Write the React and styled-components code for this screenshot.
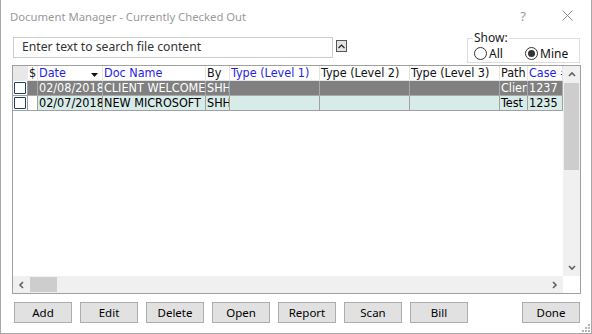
import styled, { createGlobalStyle } from "styled-components";

const UI_FONT = `"Noto Sans", "Open Sans", sans-serif`;
const GRID_FONT = `"DejaVu Sans Condensed", "DejaVu Sans", sans-serif`;

const COLUMNS = [
  { key: "check", width: 15, label: "" },
  { key: "bill", width: 10, label: "$" },
  { key: "date", width: 65, label: "Date", link: true, sorted: true },
  { key: "doc", width: 103, label: "Doc Name", link: true },
  { key: "by", width: 24, label: "By" },
  { key: "t1", width: 90, label: "Type (Level 1)", link: true },
  { key: "t2", width: 90, label: "Type (Level 2)" },
  { key: "t3", width: 90, label: "Type (Level 3)" },
  { key: "path", width: 28, label: "Path" },
  { key: "case", width: 35, label: "Case #", link: true },
];

const ROWS = [
  {
    id: "r1",
    selected: true,
    date: "02/08/2018",
    doc: "CLIENT WELCOME",
    by: "SHH",
    path: "Client",
    case: "1237",
  },
  {
    id: "r2",
    selected: false,
    date: "02/07/2018",
    doc: "NEW MICROSOFT",
    by: "SHH",
    path: "Test",
    case: "1235",
  },
];

const BUTTONS = ["Add", "Edit", "Delete", "Open", "Report", "Scan", "Bill"];

const GlobalStyle = createGlobalStyle`
  html, body {
    margin: 0;
    padding: 0;
    background: #ffffff;
  }
`;

const Window = styled.div`
  position: relative;
  box-sizing: border-box;
  width: 592px;
  height: 334px;
  background: #ffffff;
  border: 1px solid #a8a8a8;
  border-top: none;
  padding: 0 10px 0 11px;
  display: flex;
  flex-direction: column;
  font-family: ${UI_FONT};
`;

const TitleBar = styled.div`
  height: 31px;
  display: flex;
  align-items: center;
  margin: 0 -10px 0 -3px;
`;

const Title = styled.div`
  flex: 1;
  font-size: 11.3px;
  color: #9a9a9a;
  padding: 1px 0 0 1px;
`;

const HelpGlyph = styled.div`
  width: 20px;
  text-align: center;
  font-size: 13px;
  color: #9a9a9a;
  margin-right: 29px;
`;

const CloseGlyph = styled.svg`
  margin-right: 18px;
`;

/* search + show filter */
const TopRow = styled.div`
  margin-top: 6px;
  height: 26px;
  display: flex;
  align-items: flex-start;
`;

const SearchBox = styled.div`
  box-sizing: border-box;
  width: 320px;
  height: 21px;
  margin-left: 1px;
  border: 1px solid #cccccc;
  padding-left: 8px;
  font-size: 12.2px;
  line-height: 18px;
  color: #333333;
`;

const ToggleButton = styled.div`
  box-sizing: border-box;
  width: 11px;
  height: 12px;
  margin: 3px 0 0 3px;
  border: 1px solid #555555;
  background: #e3e3e3;
  display: flex;
  align-items: center;
  justify-content: center;
`;

const ShowGroup = styled.fieldset`
  box-sizing: border-box;
  width: 113px;
  margin: 0 1px 0 auto;
  padding: 0 0 0 6px;
  border: 1px solid #dcdcdc;
  display: flex;
  align-items: center;
  position: relative;
  top: -5px;
  height: 31px;
`;

const Legend = styled.legend`
  padding: 0 1px;
  margin-left: -1px;
  font-size: 12px;
  line-height: 12px;
  color: #222222;
`;

const RadioOption = styled.label`
  display: flex;
  align-items: center;
  gap: 2px;
  font-size: 12px;
  color: #111111;
  width: ${({ $width }) => $width}px;
  margin-top: 1px;
`;

const RadioCircle = styled.span`
  box-sizing: border-box;
  width: 13px;
  height: 13px;
  border: 1px solid #333333;
  border-radius: 50%;
  display: flex;
  align-items: center;
  justify-content: center;

  &::after {
    content: "";
    width: 7px;
    height: 7px;
    border-radius: 50%;
    background: ${({ $checked }) => ($checked ? "#333333" : "transparent")};
  }
`;

/* data grid */
const GridFrame = styled.div`
  margin-top: 2px;
  height: 229px;
  box-sizing: border-box;
  border: 1px solid #a0a0a0;
  display: grid;
  grid-template-columns: 1fr 17px;
  grid-template-rows: 1fr 17px;
`;

const Table = styled.div`
  overflow: hidden;
  font-family: ${GRID_FONT};
  font-size: 12.5px;
`;

const Row = styled.div`
  display: flex;
  height: 15px;
`;

const Cell = styled.div`
  box-sizing: border-box;
  flex: 0 0 ${({ $width }) => $width}px;
  height: 15px;
  padding-left: 1px;
  line-height: 14px;
  white-space: nowrap;
  overflow: hidden;
  position: relative;
  border-right: 1px solid ${({ $line }) => $line};
  border-bottom: 1px solid ${({ $line }) => $line};
  background: ${({ $bg }) => $bg};
  color: ${({ $color }) => $color};
`;

const CheckCell = styled(Cell)`
  padding: 1px 0 0 1px;
`;

const Checkbox = styled.span`
  display: block;
  box-sizing: border-box;
  width: 12px;
  height: 12px;
  border: 1px solid #1f3f66;
  border-radius: 1px;
  background: #ffffff;
`;

const SortArrow = styled.svg`
  position: absolute;
  right: 4px;
  top: 7px;
`;

const VScroll = styled.div`
  background: #f0f0f0;
  display: flex;
  flex-direction: column;
`;

const HScroll = styled.div`
  background: #f0f0f0;
  display: flex;
`;

const ScrollArrow = styled.div`
  flex: 0 0 17px;
  height: 17px;
  display: flex;
  align-items: center;
  justify-content: center;
`;

const VThumb = styled.div`
  height: 87px;
  margin: 0 1px;
  background: #cdcdcd;
`;

const HThumb = styled.div`
  width: 27px;
  margin: 1px 0;
  background: #cdcdcd;
`;

const Spacer = styled.div`
  flex: 1;
`;

const Corner = styled.div`
  background: #ffffff;
`;

/* bottom buttons */
const ButtonBar = styled.div`
  margin: 8px 1px 0 2px;
  display: flex;
  gap: 8px;
`;

const ActionButton = styled.div`
  box-sizing: border-box;
  width: 58px;
  height: 21px;
  background: #e1e1e1;
  border: 1px solid #adadad;
  font-size: 11.5px;
  line-height: 19px;
  text-align: center;
  color: #000000;
  margin-left: ${({ $pushRight }) => ($pushRight ? "auto" : "0")};
`;

const Grip = styled.svg`
  position: absolute;
  right: 1px;
  bottom: 1px;
`;

const Chevron = ({ dir }) => {
  const points = {
    up: "1,5 4,2 7,5",
    down: "1,2 4,5 7,2",
    left: "5,1 2,4 5,7",
    right: "2,1 5,4 2,7",
  }[dir];
  return (
    <svg width="8" height="8" viewBox="0 0 8 8">
      <polyline points={points} fill="none" stroke="#606060" strokeWidth="1.6" />
    </svg>
  );
};

const headerColor = (col) => (col.link ? "#1f1fe6" : "#111111");

const cellValue = (row, key) => (key === "bill" ? "" : row[key] || "");

const App = () => {
  return (
    <>
      <GlobalStyle />
      <Window>
        <TitleBar>
          <Title>Document Manager - Currently Checked Out</Title>
          <HelpGlyph>?</HelpGlyph>
          <CloseGlyph width="11" height="11" viewBox="0 0 11 11">
            <path d="M0.5 0.5 L10.5 10.5 M10.5 0.5 L0.5 10.5" stroke="#8c8c8c" strokeWidth="1" />
          </CloseGlyph>
        </TitleBar>

        <TopRow>
          <SearchBox>Enter text to search file content</SearchBox>
          <ToggleButton>
            <svg width="7" height="5" viewBox="0 0 7 5">
              <polyline points="0.5,4 3.5,1 6.5,4" fill="none" stroke="#222" strokeWidth="1.2" />
            </svg>
          </ToggleButton>
          <ShowGroup>
            <Legend>Show:</Legend>
            <RadioOption $width={51}>
              <RadioCircle />
              All
            </RadioOption>
            <RadioOption $width={50}>
              <RadioCircle $checked />
              Mine
            </RadioOption>
          </ShowGroup>
        </TopRow>

        <GridFrame>
          <Table>
            <Row>
              {COLUMNS.map((col) => (
                <Cell
                  key={col.key}
                  $width={col.width}
                  $bg={col.key === "check" ? "#e8e8e8" : "#ffffff"}
                  $line={col.key === "check" ? "#e8e8e8" : "#e4e4e4"}
                  $color={headerColor(col)}
                >
                  {col.label}
                  {col.sorted && (
                    <SortArrow width="7" height="4" viewBox="0 0 7 4">
                      <polygon points="0,0 7,0 3.5,4" fill="#111" />
                    </SortArrow>
                  )}
                </Cell>
              ))}
            </Row>
            {ROWS.map((row) => {
              const bg = row.selected ? "#808080" : "#d7ebe9";
              const color = row.selected ? "#ffffff" : "#000000";
              const line = row.selected ? "#a9a9a9" : "#a0a0a0";
              return (
                <Row key={row.id}>
                  {COLUMNS.map((col) => {
                    if (col.key === "check") {
                      return (
                        <CheckCell key={col.key} $width={col.width} $bg="#ffffff" $line="#a0a0a0">
                          <Checkbox />
                        </CheckCell>
                      );
                    }
                    const cellBg = col.key === "bill" && !row.selected ? "#ffffff" : bg;
                    return (
                      <Cell key={col.key} $width={col.width} $bg={cellBg} $line={line} $color={color}>
                        {cellValue(row, col.key)}
                      </Cell>
                    );
                  })}
                </Row>
              );
            })}
          </Table>

          <VScroll>
            <ScrollArrow>
              <Chevron dir="up" />
            </ScrollArrow>
            <VThumb />
            <Spacer />
            <ScrollArrow>
              <Chevron dir="down" />
            </ScrollArrow>
          </VScroll>

          <HScroll>
            <ScrollArrow>
              <Chevron dir="left" />
            </ScrollArrow>
            <HThumb />
            <Spacer />
            <ScrollArrow>
              <Chevron dir="right" />
            </ScrollArrow>
          </HScroll>
          <Corner />
        </GridFrame>

        <ButtonBar>
          {BUTTONS.map((label) => (
            <ActionButton key={label}>{label}</ActionButton>
          ))}
          <ActionButton $pushRight>Done</ActionButton>
        </ButtonBar>

        <Grip width="8" height="8" viewBox="0 0 8 8">
          {[
            [6, 0],
            [6, 3],
            [3, 3],
            [6, 6],
            [3, 6],
            [0, 6],
          ].map(([x, y]) => (
            <rect key={`${x}-${y}`} x={x} y={y} width="2" height="2" fill="#b5b5b5" />
          ))}
        </Grip>
      </Window>
    </>
  );
};

export default App;
